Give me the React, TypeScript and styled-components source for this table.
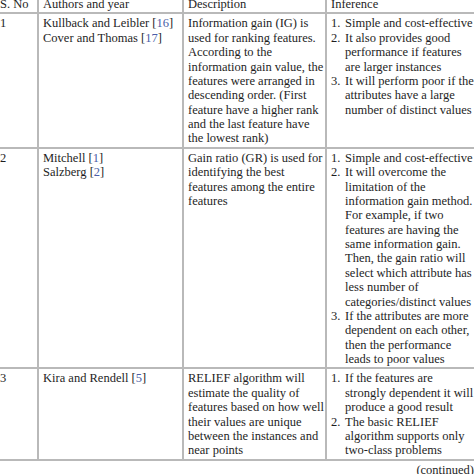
import React from "react";
import styled, { createGlobalStyle } from "styled-components";

interface IRow {
  no: string;
  authors: { name: string; refs: string[] }[];
  description: string;
  inference: string[];
}

const rows: IRow[] = [
  {
    no: "1",
    authors: [
      { name: "Kullback and Leibler", refs: ["16"] },
      { name: "Cover and Thomas", refs: ["17"] },
    ],
    description:
      "Information gain (IG) is used for ranking features. According to the information gain value, the features were arranged in descending order. (First feature have a higher rank and the last feature have the lowest rank)",
    inference: [
      "Simple and cost-effective",
      "It also provides good performance if features are larger instances",
      "It will perform poor if the attributes have a large number of distinct values",
    ],
  },
  {
    no: "2",
    authors: [
      { name: "Mitchell", refs: ["1"] },
      { name: "Salzberg", refs: ["2"] },
    ],
    description:
      "Gain ratio (GR) is used for identifying the best features among the entire features",
    inference: [
      "Simple and cost-effective",
      "It will overcome the limitation of the information gain method. For example, if two features are having the same information gain. Then, the gain ratio will select which attribute has less number of categories/distinct values",
      "If the attributes are more dependent on each other, then the performance leads to poor values",
    ],
  },
  {
    no: "3",
    authors: [{ name: "Kira and Rendell", refs: ["5"] }],
    description:
      "RELIEF algorithm will estimate the quality of features based on how well their values are unique between the instances and near points",
    inference: [
      "If the features are strongly dependent it will produce a good result",
      "The basic RELIEF algorithm supports only two-class problems",
    ],
  },
];

const App = () => {
  return (
    <>
      <GlobalStyle />
      <Page>
        <Table>
          <Cell first>S. No</Cell>
          <Cell>Authors and year</Cell>
          <Cell>Description</Cell>
          <Cell last>Inference</Cell>
          {rows.map((row) => (
            <React.Fragment key={row.no}>
              <Cell first>{row.no}</Cell>
              <Cell>
                {row.authors.map((a) => (
                  <AuthorLine key={a.name}>
                    {a.name} [
                    {a.refs.map((r) => (
                      <Ref key={r}>{r}</Ref>
                    ))}
                    ]
                  </AuthorLine>
                ))}
              </Cell>
              <Cell>{row.description}</Cell>
              <Cell last>
                <List>
                  {row.inference.map((item, i) => (
                    <Item key={i}>
                      <Num>{i + 1}.</Num>
                      <ItemText>{item}</ItemText>
                    </Item>
                  ))}
                </List>
              </Cell>
            </React.Fragment>
          ))}
        </Table>
        <Continued>(continued)</Continued>
      </Page>
    </>
  );
};

export default App;

const GlobalStyle = createGlobalStyle`
  html, body {
    margin: 0;
    padding: 0;
    background: #ffffff;
    overflow: hidden;
  }
  body {
    font-family: "Liberation Serif", "Times New Roman", serif;
    font-size: 12.5px;
    line-height: 1.15;
    color: #1e1e1e;
  }
`;

const Page = styled.div`
  width: 479px;
  margin-top: -5px;
  margin-left: -2px;
`;

const Table = styled.div`
  display: grid;
  grid-template-columns: 41px 145px 143px 150px;
`;

const Cell = styled.div<{ first?: boolean; last?: boolean }>`
  box-sizing: border-box;
  padding: 2px ${(p) => (p.last ? "3px" : "0")} 1px
    ${(p) => (p.first ? "2px" : "4px")};
  border-bottom: 2px solid #b9b9b9;
  border-right: ${(p) => (p.last ? "none" : "2px solid #b9b9b9")};
`;

const AuthorLine = styled.div`
  white-space: nowrap;
`;

const Ref = styled.span`
  color: #4a5ea8;
`;

const List = styled.ol`
  list-style: none;
  margin: 0;
  padding: 0;
`;

const Item = styled.li`
  display: flex;
`;

const Num = styled.span`
  flex: 0 0 14px;
`;

const ItemText = styled.span`
  flex: 1;
`;

const Continued = styled.div`
  text-align: right;
  padding: 2px 3px 0 0;
`;
